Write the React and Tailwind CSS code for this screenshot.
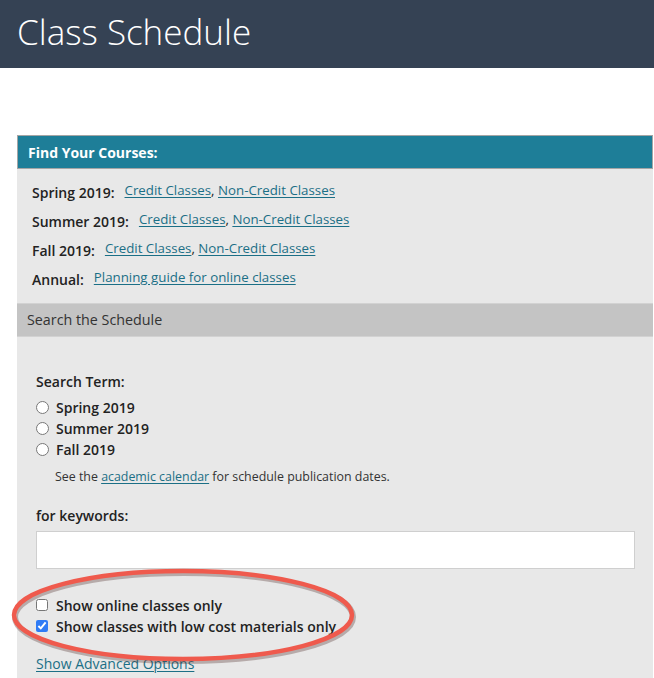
import { useState } from "react";

const terms = [
  { label: "Spring 2019:", links: ["Credit Classes", "Non-Credit Classes"] },
  { label: "Summer 2019:", links: ["Credit Classes", "Non-Credit Classes"] },
  { label: "Fall 2019:", links: ["Credit Classes", "Non-Credit Classes"] },
  { label: "Annual:", links: ["Planning guide for online classes"] },
];

function Link({ children }) {
  return (
    <a href="#" className="text-[#1b6f86] underline underline-offset-2 decoration-1">
      {children}
    </a>
  );
}

export default function App() {
  const [term, setTerm] = useState("");
  const [online, setOnline] = useState(false);
  const [lowCost, setLowCost] = useState(true);

  return (
    <div className="min-h-[678px] bg-white text-[#222] text-[14px]" style={{ fontFamily: '"Open Sans", "Liberation Sans", sans-serif' }}>
      <div className="h-[68px] bg-[#354254] flex items-center px-[17px]">
        <h1 className="text-white text-[35px] font-light leading-none -mt-[5px]">Class Schedule</h1>
      </div>

      <div className="ml-[17px] mr-[1px] mt-[67px] relative">
        <div className="h-[34px] bg-[#1e7e98] border border-[#a5a5a5] flex items-center px-[10px]">
          <span className="text-white font-bold text-[14px]">Find Your Courses:</span>
        </div>

        <div className="bg-[#e8e8e8] pt-[13px] pb-[14px] px-[15px] flex flex-col gap-[9px]">
          {terms.map((t) => (
            <div key={t.label} className="flex items-center gap-[10px] h-[20px]">
              <span className="font-semibold">{t.label}</span>
              <span className="-mt-[3px] text-[13.3px]">
                {t.links.map((l, i) => (
                  <span key={l}>
                    {i > 0 && ", "}
                    <Link>{l}</Link>
                  </span>
                ))}
              </span>
            </div>
          ))}
        </div>

        <div className="h-[34px] bg-[#c4c4c4] border-y border-[#d2d2d2] flex items-center px-[10px] text-[#333] text-[14.3px]">
          Search the Schedule
        </div>

        <div className="bg-[#e8e8e8] px-[19px] pt-[34px] pb-[8px]">
          <div className="font-semibold">Search Term:</div>
          <div className="mt-[5px] flex flex-col">
            {["Spring 2019", "Summer 2019", "Fall 2019"].map((s) => (
              <label key={s} className="flex items-center gap-[7px] h-[21px] font-semibold">
                <input
                  type="radio"
                  name="term"
                  checked={term === s}
                  onChange={() => setTerm(s)}
                  className="w-[13px] h-[13px] m-0"
                />
                {s}
              </label>
            ))}
          </div>
          <p className="text-[12.4px] ml-[19px] mt-[8px] text-[#333]">
            See the <Link>academic calendar</Link> for schedule publication dates.
          </p>

          <div className="font-semibold mt-[18px]">for keywords:</div>
          <input
            type="text"
            className="mt-[5px] w-[599px] h-[38px] bg-white border border-[#cfcfcf] block px-2"
          />

          <div className="mt-[26px] flex flex-col">
            <label className="flex items-center gap-[8px] h-[21px] font-semibold">
              <input
                type="checkbox"
                checked={online}
                onChange={(e) => setOnline(e.target.checked)}
                className="w-[12px] h-[12px] m-0"
              />
              Show online classes only
            </label>
            <label className="flex items-center gap-[8px] h-[21px] font-semibold">
              <input
                type="checkbox"
                checked={lowCost}
                onChange={(e) => setLowCost(e.target.checked)}
                className="w-[12px] h-[12px] m-0 accent-[#2f7bf5]"
              />
              Show classes with low cost materials only
            </label>
          </div>

          <div className="mt-[16px]">
            <Link>Show Advanced Options</Link>
          </div>
        </div>

        {/* highlight ring over the checkboxes */}
        <svg
          className="absolute pointer-events-none left-[-8px] top-[431px]"
          width="352"
          height="100"
          viewBox="0 0 352 100"
        >
          <ellipse cx="174" cy="49" rx="169" ry="44" fill="none" stroke="#5a3a36" strokeOpacity="0.35" strokeWidth="6" transform="translate(1 2)" />
          <ellipse cx="174" cy="49" rx="169" ry="44" fill="none" stroke="#ef5a4d" strokeWidth="4.5" />
        </svg>
      </div>
    </div>
  );
}
